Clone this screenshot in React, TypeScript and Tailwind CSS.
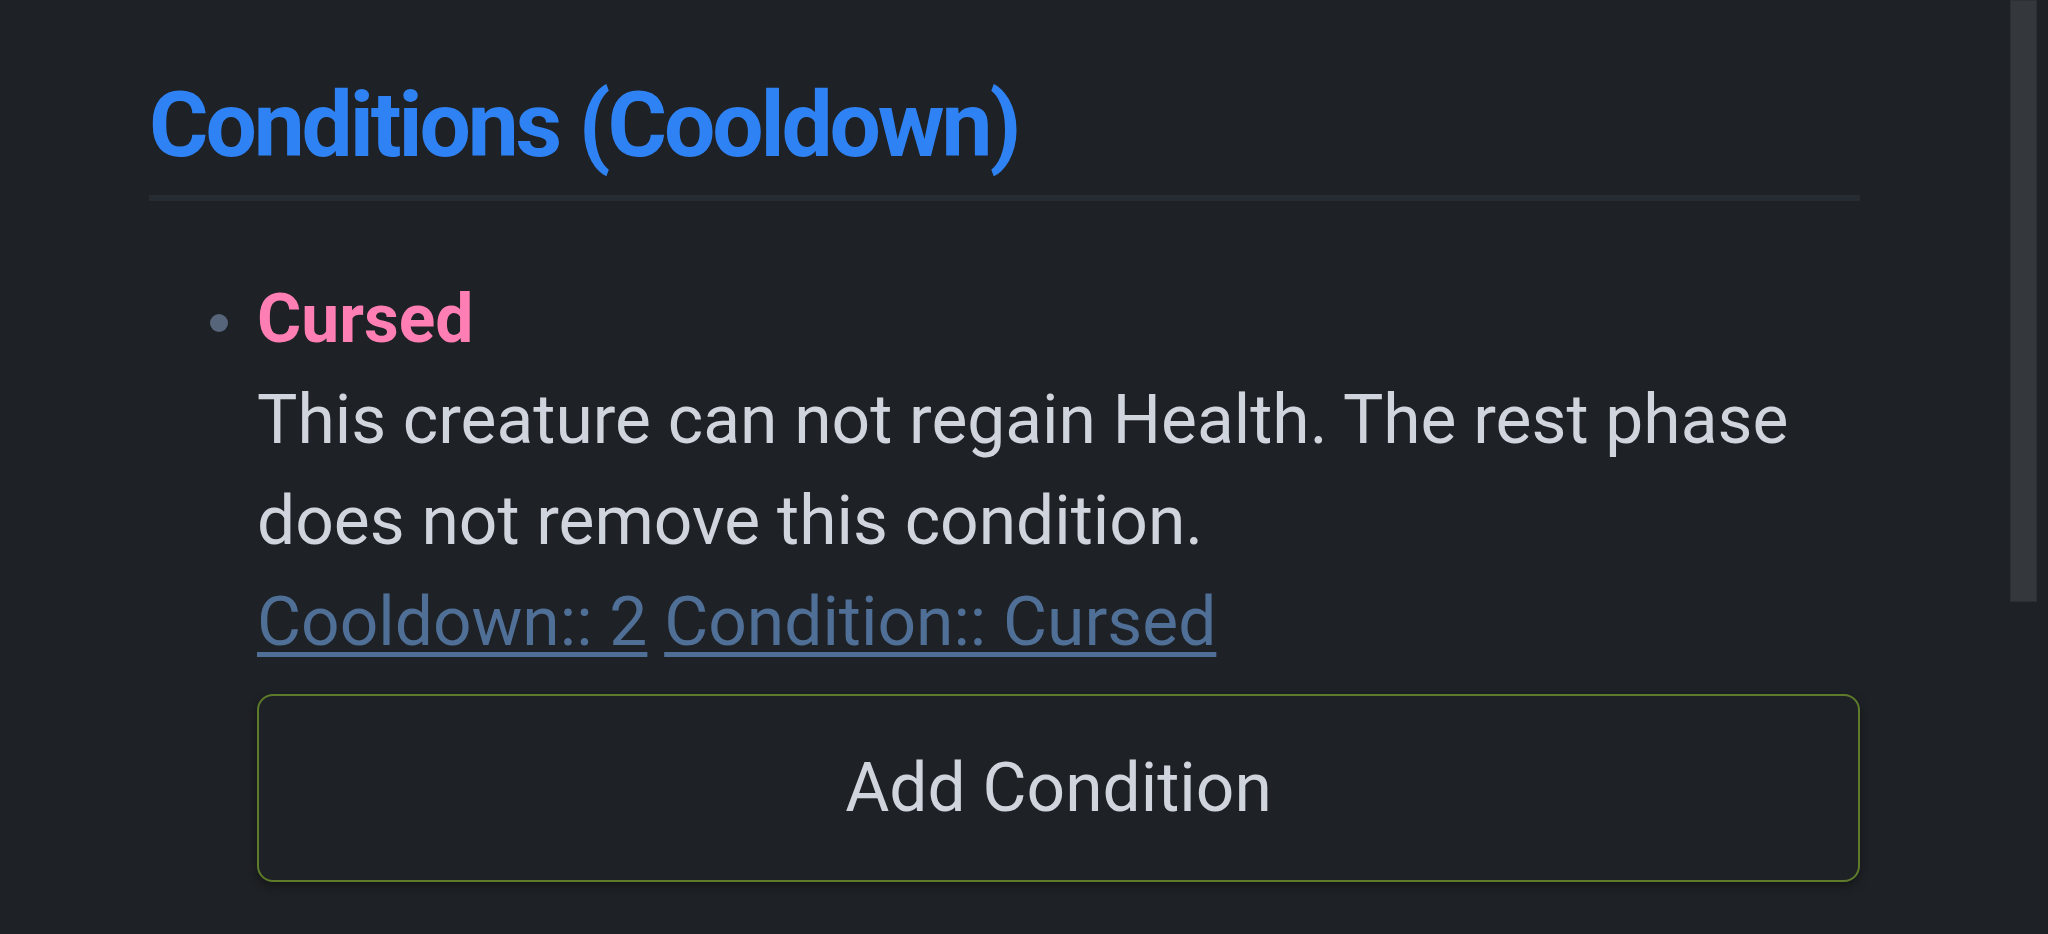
import React from "react";

export default function App() {
  return (
    <div
      className="flex h-[934px] w-full overflow-hidden bg-[#1e2125]"
      style={{ fontFamily: "Roboto, 'Liberation Sans', sans-serif" }}
    >
      <div className="flex flex-1 flex-col pl-[149px] pt-[72px]">
        <div className="w-[1711px]">
          <h2 className="text-[91px] font-bold leading-[107px] tracking-[-3.1px] text-[#2f82f4]">
            Conditions (Cooldown)
          </h2>
          <div className="mt-[16px] h-[6px] w-full bg-[#272b32]" />
          <ul className="mt-[68px]">
            <li className="flex">
              <span className="ml-[61px] mt-[45px] h-[18px] w-[18px] shrink-0 rounded-full bg-[#56657a]" />
              <div className="ml-[29px] flex-1 text-[67.7px] leading-[101px]">
                <div className="font-bold text-[#ff7eb3]">Cursed</div>
                <div className="text-[#d0d4dc]">
                  This creature can not regain Health. The rest phase does not remove this condition.
                </div>
                <div className="text-[#4f6f96]">
                  <a className="underline decoration-[5px] underline-offset-[7px]">Cooldown:: 2</a>{" "}
                  <a className="underline decoration-[5px] underline-offset-[7px]">Condition:: Cursed</a>
                </div>
                <button className="mt-[21px] flex h-[188px] w-full items-center justify-center rounded-[16px] border-2 border-[#5e7b2c] bg-[#1e2125] text-[67.7px] leading-[101px] text-[#d0d4dc] shadow-[0_4px_10px_rgba(0,0,0,0.35)]">
                  Add Condition
                </button>
              </div>
            </li>
          </ul>
        </div>
      </div>
      <div className="flex w-[38px] shrink-0 flex-col">
        <div className="h-[602px] w-[27px] border border-[#2c3034] bg-[#34383c]" />
      </div>
    </div>
  );
}
